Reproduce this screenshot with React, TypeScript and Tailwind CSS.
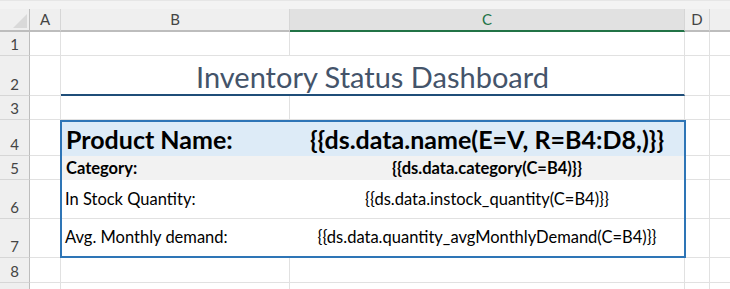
const font = { fontFamily: "Lato, 'Liberation Sans', sans-serif" };

const grid = "border-r border-b border-[#e1e1e1]";

const RowHead = ({ n, h }: { n?: number; h: string }) => (
  <div
    className={`${h} w-[30px] shrink-0 flex items-end justify-center pb-[3px] text-[15px] leading-none text-[#444] bg-[#efefef] border-r border-r-[#bdbdbd] border-b border-b-[#d6d6d6]`}
  >
    {n}
  </div>
);

const Cell = ({ w, children, className = "" }: { w: string; children?: React.ReactNode; className?: string }) => (
  <div className={`${w} shrink-0 ${grid} ${className}`}>{children}</div>
);

const PlainRow = ({ n, h }: { n?: number; h: string }) => (
  <div className={`flex ${h}`}>
    <RowHead n={n} h={h} />
    <Cell w="w-[31px]" />
    <Cell w="w-[229px]" />
    <Cell w="w-[395px]" />
    <Cell w="w-[25px]" />
    <Cell w="w-[40px]" />
  </div>
);

export default function App() {
  return (
    <div className="w-[730px] h-[289px] overflow-hidden bg-white" style={font}>
      {/* ribbon edge */}
      <div className="h-[9px] bg-[#f3f3f3] border-t border-[#e6e6e6]" />

      {/* column headers */}
      <div className="flex h-[23px] bg-[#efefef] text-[15px] text-[#444] leading-none">
        <div className="w-[30px] shrink-0 border-r border-r-[#bdbdbd] border-b-2 border-b-[#bdbdbd] flex items-end justify-end p-[2px]">
          <div className="w-0 h-0 border-l-[14px] border-l-transparent border-b-[14px] border-b-[#d9d9d9]" />
        </div>
        <div className="w-[31px] shrink-0 border-r border-r-[#d6d6d6] border-b-2 border-b-[#bdbdbd] flex items-center justify-center">A</div>
        <div className="w-[229px] shrink-0 border-r border-r-[#d6d6d6] border-b-2 border-b-[#bdbdbd] flex items-center justify-center">B</div>
        <div className="w-[395px] shrink-0 bg-[#e1e1e1] text-[#217346] border-r border-r-[#d6d6d6] border-b-2 border-b-[#217346] flex items-center justify-center">C</div>
        <div className="w-[25px] shrink-0 border-r border-r-[#d6d6d6] border-b-2 border-b-[#bdbdbd] flex items-center justify-center">D</div>
        <div className="w-[40px] shrink-0 border-b-2 border-b-[#bdbdbd]" />
      </div>

      <PlainRow n={1} h="h-[24px]" />

      {/* title row */}
      <div className="flex h-[40px]">
        <RowHead n={2} h="h-[40px]" />
        <Cell w="w-[31px]" />
        <div className="w-[624px] shrink-0 border-r border-[#e1e1e1] border-b-2 border-b-[#1f4e79] flex items-end justify-center pb-[3px]">
          <span className="text-[29px] leading-none text-[#44546a]">Inventory Status Dashboard</span>
        </div>
        <Cell w="w-[25px]" />
        <Cell w="w-[40px]" />
      </div>

      <PlainRow n={3} h="h-[24px]" />

      {/* data block */}
      <div className="flex h-[138px]">
        <div className="flex flex-col">
          <RowHead n={4} h="h-[36px]" />
          <RowHead n={5} h="h-[24px]" />
          <RowHead n={6} h="h-[39px]" />
          <RowHead n={7} h="h-[39px]" />
        </div>
        <div className="flex flex-col w-[30px] shrink-0">
          <div className={`h-[36px] ${grid} border-r-0`} />
          <div className={`h-[24px] ${grid} border-r-0`} />
          <div className={`h-[39px] ${grid} border-r-0`} />
          <div className={`h-[39px] ${grid} border-r-0`} />
        </div>
        <div className="w-[626px] shrink-0 border-2 border-[#2e75b6] flex flex-col text-black">
          <div className="h-[34px] flex items-center bg-[#ddebf7] font-bold text-[25px] leading-none">
            <div className="w-[228px] pl-[4px]">Product Name:</div>
            <div className="flex-1 text-center">{"{{ds.data.name(E=V, R=B4:D8,)}}"}</div>
          </div>
          <div className="h-[24px] flex items-center bg-[#f2f2f2] font-bold text-[16.5px] leading-none">
            <div className="w-[228px] pl-[4px]">Category:</div>
            <div className="flex-1 text-center">{"{{ds.data.category(C=B4)}}"}</div>
          </div>
          <div className="h-[39px] flex items-center border-b border-[#e1e1e1] text-[16.5px] leading-none">
            <div className="w-[228px] pl-[3px]">In Stock Quantity:</div>
            <div className="flex-1 text-center">{"{{ds.data.instock_quantity(C=B4)}}"}</div>
          </div>
          <div className="flex-1 flex items-center text-[16.5px] leading-none">
            <div className="w-[228px] pl-[3px]">Avg. Monthly demand:</div>
            <div className="flex-1 text-center">{"{{ds.data.quantity_avgMonthlyDemand(C=B4)}}"}</div>
          </div>
        </div>
        <div className="flex flex-col w-[24px] shrink-0">
          <div className={`h-[36px] ${grid}`} />
          <div className={`h-[24px] ${grid}`} />
          <div className={`h-[39px] ${grid}`} />
          <div className={`h-[39px] ${grid}`} />
        </div>
        <div className="flex flex-col w-[40px] shrink-0">
          <div className={`h-[36px] ${grid}`} />
          <div className={`h-[24px] ${grid}`} />
          <div className={`h-[39px] ${grid}`} />
          <div className={`h-[39px] ${grid}`} />
        </div>
      </div>

      <PlainRow n={8} h="h-[25px]" />
      <PlainRow h="h-[24px]" />
    </div>
  );
}
